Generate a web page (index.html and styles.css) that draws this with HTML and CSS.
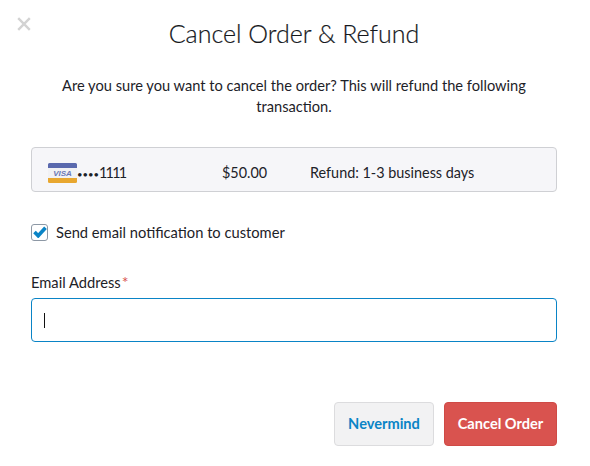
FILE: index.html
```html
<!DOCTYPE html>
<html lang="en">
<head>
<meta charset="utf-8">
<title>Cancel Order &amp; Refund</title>
<link rel="stylesheet" href="styles.css">
</head>
<body>
<main class="dialog">
  <svg class="close" width="14" height="14" viewBox="0 0 14 14" aria-label="Close"><path d="M1.2 1.2 12.8 12.8M12.8 1.2 1.2 12.8" fill="none" stroke="#d3d3d3" stroke-width="2.4"/></svg>
  <h1 class="title">Cancel Order &amp; Refund</h1>
  <p class="message">Are you sure you want to cancel the order? This will refund the following transaction.</p>
  <div class="transaction">
    <div class="card">
      <svg class="visa" width="29" height="20" viewBox="0 0 29 20" aria-hidden="true">
        <rect x="0" y="0" width="29" height="20" rx="1.5" fill="#f1f1f4"/>
        <path d="M1.5 0h26A1.5 1.5 0 0 1 29 1.500V5H0V1.500A1.500 1.500 0 0 1 1.500 0Z" fill="#5a69ae"/>
        <path d="M0 15h29v3.500A1.500 1.500 0 0 1 27.500 20H1.500A1.500 1.500 0 0 1 0 18.500Z" fill="#e8a730"/>
        <text x="14.500" y="12.800" class="visa-text">VISA</text>
      </svg>
      <span class="number"><span class="dots">••••</span><span class="digits">1111</span></span>
    </div>
    <div class="amount">$50.00</div>
    <div class="refund">Refund: 1-3 business days</div>
  </div>
  <label class="check">
    <span class="box"><svg width="14" height="12" viewBox="0 0 14 12" aria-hidden="true"><path d="M1.500 6 5.200 9.800 12.500 1.800" fill="none" stroke="#0a84c6" stroke-width="3.600"/></svg></span>
    <span>Send email notification to customer</span>
  </label>
  <div class="field-label">Email Address<span class="req">*</span></div>
  <div class="input"><span class="caret"></span></div>
  <div class="actions">
    <button class="btn btn-secondary" type="button">Nevermind</button>
    <button class="btn btn-danger" type="button">Cancel Order</button>
  </div>
</main>
</body>
</html>
```
FILE: styles.css
```css
* { box-sizing: border-box; }
html, body { margin: 0; height: 100%; background: #fff; }
body { font-family: "Lato", "Open Sans", sans-serif; color: #1d2228; }
.dialog { position: relative; width: 590px; height: 466px; padding: 17px 33px 0 31px; }
.close { position: absolute; left: 17px; top: 17px; }
.title { margin: 0; font-size: 25px; font-weight: 300; line-height: 32px; text-align: center; color: #15181c; -webkit-text-stroke: 0.2px #15181c; }
.message { margin: 26px 0 0; padding: 0 20px; font-size: 14.65px; line-height: 21px; text-align: center; }
.transaction { display: flex; align-items: center; height: 45px; margin-top: 30px; padding: 6px 0 0 16px; background: #f6f6f9; border: 1px solid #cfd0d4; border-radius: 4px; font-size: 14.4px; }
.card { display: flex; align-items: center; gap: 0; width: 174px; }
.visa-text { font: italic 700 8px "Liberation Sans", sans-serif; fill: #6a78b4; text-anchor: middle; }
.dots { font-size: 9.5px; }
.digits { letter-spacing: -1.8px; }
.amount { width: 88px; }
.check { display: flex; align-items: center; gap: 8px; margin-top: 30px; font-size: 14.7px; line-height: 20px; }
.box { display: flex; align-items: center; justify-content: center; width: 17px; height: 17px; border: 1px solid #8d98a5; border-radius: 3px; background: #fff; }
.field-label { margin-top: 30px; font-size: 14.7px; line-height: 20px; }
.req { margin-left: 1px; color: #d9534f; font-size: 16px; line-height: 1; }
.input { display: flex; align-items: center; height: 44px; margin-top: 6px; padding-left: 12px; border: 1px solid #0a84c6; border-radius: 4px; }
.caret { width: 1px; height: 15px; background: #111; }
.actions { display: flex; justify-content: flex-end; gap: 10px; margin-top: 60px; }
.btn { height: 44px; padding: 0 0 2px; border-radius: 4px; font: 700 14.6px "Lato", sans-serif; }
.btn-secondary { width: 100px; background: #f2f2f3; border: 1px solid #dcdcde; color: #0a84c6; }
.btn-danger { width: 113px; background: #d9534f; border: 1px solid #cf4a46; color: #fff; }
```
